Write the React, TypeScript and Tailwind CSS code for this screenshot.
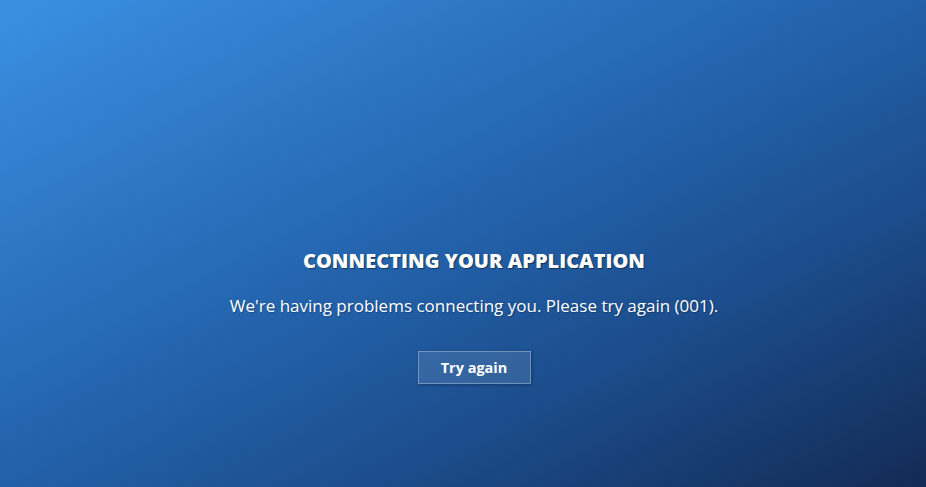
export default function App() {
  return (
    <div className="w-full h-[487px] bg-[linear-gradient(to_bottom_right,#3b90e3_0%,#2362ab_48%,#1c4d8c_70%,#132b55_100%)] flex flex-col items-center pt-[249px] pl-[22px] font-['Open_Sans','Noto_Sans',sans-serif] text-white">
      <h1 className="text-[20px] font-extrabold uppercase leading-6 [text-shadow:1px_1px_1px_rgba(0,0,0,0.45)]">
        Connecting your application
      </h1>
      <p className="mt-[21px] text-[17px] leading-6 [text-shadow:1px_1px_1px_rgba(0,0,0,0.25)]">
        We're having problems connecting you. Please try again (001).
      </p>
      <button className="mt-[33px] w-[113px] h-[33px] border border-white/30 bg-white/10 shadow-[1px_1px_3px_rgba(0,0,0,0.3)] text-[14.5px] font-bold">
        Try again
      </button>
    </div>
  );
}
